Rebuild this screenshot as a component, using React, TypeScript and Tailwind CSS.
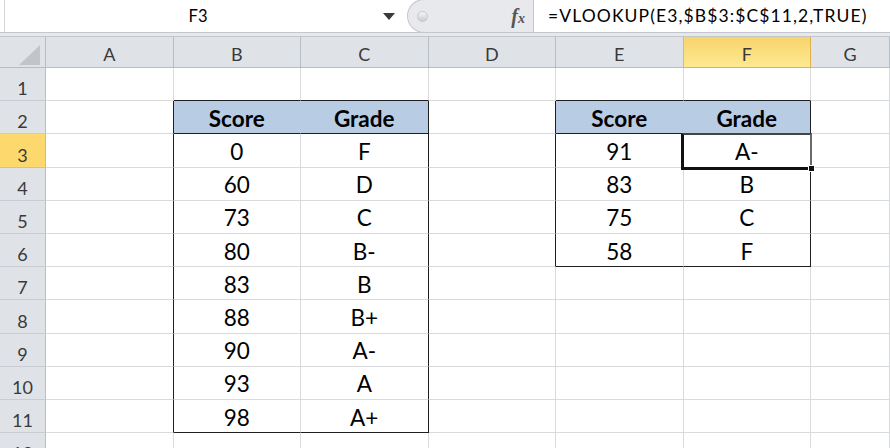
import React from 'react';

const COLS = ['A', 'B', 'C', 'D', 'E', 'F', 'G'];
const ROWS = [1, 2, 3, 4, 5, 6, 7, 8, 9, 10, 11, 12];

const lookup: [string, string][] = [
  ['0', 'F'],
  ['60', 'D'],
  ['73', 'C'],
  ['80', 'B-'],
  ['83', 'B'],
  ['88', 'B+'],
  ['90', 'A-'],
  ['93', 'A'],
  ['98', 'A+'],
];

const scores: [string, string][] = [
  ['91', 'A-'],
  ['83', 'B'],
  ['75', 'C'],
  ['58', 'F'],
];

// Cell contents keyed like "B3"
const cells: Record<string, string> = { B2: 'Score', C2: 'Grade', E2: 'Score', F2: 'Grade' };
lookup.forEach(([s, g], i) => {
  cells[`B${i + 3}`] = s;
  cells[`C${i + 3}`] = g;
});
scores.forEach(([s, g], i) => {
  cells[`E${i + 3}`] = s;
  cells[`F${i + 3}`] = g;
});

function inTable(col: string, row: number) {
  if ((col === 'B' || col === 'C') && row >= 2 && row <= 11) return true;
  if ((col === 'E' || col === 'F') && row >= 2 && row <= 6) return true;
  return false;
}

function Cell({ col, row }: { col: string; row: number }) {
  const text = cells[`${col}${row}`];
  const header = inTable(col, row) && row === 2;

  const darkRight =
    ((col === 'A' || col === 'C') && row >= 2 && row <= 11) ||
    ((col === 'D' || col === 'F') && row >= 2 && row <= 6);
  const darkBottom =
    ((col === 'B' || col === 'C') && (row === 1 || row === 2 || row === 11)) ||
    ((col === 'E' || col === 'F') && (row === 1 || row === 2 || row === 6));
  const blueRight = header && (col === 'B' || col === 'E');

  return (
    <div
      className={[
        'flex items-end justify-center pb-[3px] border-r border-b text-[22.5px] leading-none text-black',
        header ? 'bg-[#b8cce4] font-bold' : 'bg-white',
        darkRight ? 'border-r-[#1e1e1e]' : blueRight ? 'border-r-[#b8cce4]' : 'border-r-[#d9dadb]',
        darkBottom ? 'border-b-[#1e1e1e]' : 'border-b-[#d9dadb]',
      ].join(' ')}
    >
      {text}
    </div>
  );
}

export default function App() {
  return (
    <div className="w-[890px] h-[448px] overflow-hidden bg-white font-['Lato',sans-serif] select-none">
      {/* Formula bar */}
      <div className="flex h-[33px] border-b border-[#c3c7cc] bg-white">
        <div className="ml-[4px] w-[403px] flex items-center border-l border-[#d3d6da]">
          <div className="flex-1 text-center text-[16.5px] text-black pl-[8px]">F3</div>
          <svg width="12" height="7" viewBox="0 0 12 7" className="mr-[12px]">
            <polygon points="0,0 12,0 6,7" fill="#3a3a3a" />
          </svg>
        </div>
        <div className="w-[126px] flex items-center rounded-l-full border border-r-0 border-[#c3c7cc] bg-[#e7e9ec] my-[-1px]">
          <div className="ml-[9px] w-[11px] h-[11px] rounded-full bg-gradient-to-b from-[#f5f6f7] to-[#c9cdd2] border border-[#c4c8cd]" />
          <div className="flex-1" />
          <span className="mr-[8px] font-['Liberation_Serif',serif] italic font-bold text-[20px] text-[#555] leading-none">
            f<span className="text-[14px]">x</span>
          </span>
        </div>
        <div className="flex-1 flex items-center border-l border-[#c3c7cc] pl-[14px] text-[17.5px] tracking-[1.1px] text-black">
          =VLOOKUP(E3,$B$3:$C$11,2,TRUE)
        </div>
      </div>
      <div className="h-[3px] bg-[#e6e8eb]" />

      {/* Column headers */}
      <div className="grid grid-cols-[46px_repeat(6,127.5px)_1fr] h-[32px] border-t border-[#c3c7cc] bg-[#dfe3e8]">
        <div className="relative border-r border-b border-[#b7bdc4]">
          <svg width="22" height="21" viewBox="0 0 22 21" className="absolute left-[19px] top-[8px]">
            <polygon points="21,0 21,20 0,20" fill="#c1c5ca" />
          </svg>
        </div>
        {COLS.map(c => (
          <div
            key={c}
            className={[
              'flex items-end justify-center pb-[4px] border-r border-b text-[18px] leading-none',
              c === 'F'
                ? 'bg-linear-to-b from-[#f8d46a] to-[#fee992] border-[#e0b04c] text-[#3a3a3a]'
                : 'border-[#b7bdc4] text-[#3a3a3a]',
            ].join(' ')}
          >
            {c}
          </div>
        ))}
      </div>

      {/* Sheet body */}
      <div className="relative">
        <div className="grid grid-cols-[46px_repeat(6,127.5px)_1fr] auto-rows-[33.2px]">
          {ROWS.map(r => (
            <React.Fragment key={r}>
              <div
                className={[
                  'flex items-end justify-center pb-[3px] border-r border-b border-r-[#b7bdc4] text-[18px] leading-none text-[#3a3a3a]',
                  r === 3 ? 'bg-[#fcd86d] border-b-[#e9c15a]' : 'bg-[#dfe3e8] border-b-[#c8cdd3]',
                ].join(' ')}
              >
                {r}
              </div>
              {COLS.map(c => (
                <Cell key={c} col={c} row={r} />
              ))}
            </React.Fragment>
          ))}
        </div>

        {/* Active cell F3 */}
        <div className="absolute left-[681px] top-[65px] w-[131px] h-[37px] border-l-[3px] border-b-[3px] border-t-2 border-r-2 border-l-[#111] border-b-[#111] border-t-[#444] border-r-[#6a6a6a]">
          <div className="absolute -right-[5px] -bottom-[5px] w-[7px] h-[7px] bg-[#111] border border-white" />
        </div>
      </div>
    </div>
  );
}
